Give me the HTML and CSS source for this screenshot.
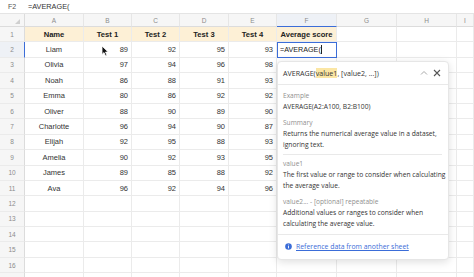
FILE: index.html
```
<!DOCTYPE html>
<html lang="en">
<head>
    <meta charset="UTF-8">
    <title>Sheet</title>
    <link rel="stylesheet" href="styles.css">
</head>
<body>

<div class="formula-bar">
    <span class="cell-ref">F2</span>
    <span class="formula">=AVERAGE(</span>
</div>

<div id="sheet" class="sheet"></div>

<svg class="pointer" width="8" height="12" viewBox="0 0 8 12">
    <path d="M1 1 L1 9.5 L3 7.6 L4.6 11 L6 10.4 L4.5 7.1 L7.2 7 Z" fill="#111" stroke="#fff" stroke-width="0.8"/>
</svg>

<div class="popup">
    <div class="popup-head">
        <span class="signature">AVERAGE(<span class="arg-hl">value1</span>, [value2, ...])</span>
        <span class="head-icons">
            <svg width="8" height="8" viewBox="0 0 8 8"><polyline points="1,5.5 4,2.5 7,5.5" fill="none" stroke="#aaa" stroke-width="1"/></svg>
            <svg width="8" height="8" viewBox="0 0 8 8"><path d="M1 1 L7 7 M7 1 L1 7" stroke="#555" stroke-width="1.1"/></svg>
        </span>
    </div>
    <div class="popup-body">
        <div class="group">
            <div class="label">Example</div>
            <div class="text">AVERAGE(A2:A100, B2:B100)</div>
        </div>
        <div class="group">
            <div class="label">Summary</div>
            <div class="text">Returns the numerical average value in a dataset,<br>ignoring text.</div>
        </div>
        <div class="divider"></div>
        <div class="group">
            <div class="label">value1</div>
            <div class="text">The first value or range to consider when calculating<br>the average value.</div>
        </div>
        <div class="group">
            <div class="label">value2... - [optional] repeatable</div>
            <div class="text">Additional values or ranges to consider when<br>calculating the average value.</div>
        </div>
    </div>
    <div class="popup-foot">
        <svg width="7" height="7" viewBox="0 0 7 7"><circle cx="3.5" cy="3.5" r="3.3" fill="#3b6dd8"/><rect x="3.05" y="3" width="0.9" height="2.4" fill="#fff"/><rect x="3.05" y="1.6" width="0.9" height="0.8" fill="#fff"/></svg>
        <a href="#" class="ref-link">Reference data from another sheet</a>
    </div>
</div>

<script>
    const letters = ['A', 'B', 'C', 'D', 'E', 'F', 'G', 'H', 'I'];
    const heads = ['Name', 'Test 1', 'Test 2', 'Test 3', 'Test 4', 'Average score'];
    const students = [
        ['Liam', 89, 92, 95, 93],
        ['Olivia', 97, 94, 96, 98],
        ['Noah', 86, 88, 91, 93],
        ['Emma', 80, 86, 92, 92],
        ['Oliver', 88, 90, 89, 90],
        ['Charlotte', 96, 94, 90, 87],
        ['Elijah', 92, 95, 88, 93],
        ['Amelia', 90, 92, 93, 95],
        ['James', 89, 85, 88, 92],
        ['Ava', 96, 92, 94, 96]
    ];

    const sheet = document.getElementById('sheet');

    function addCell(cls, text) {
        const div = document.createElement('div');
        div.className = 'cell ' + cls;
        div.innerHTML = text || '';
        sheet.appendChild(div);
        return div;
    }

    addCell('corner', '<span class="corner-mark"></span>');
    letters.forEach(l => addCell('col-head' + (l === 'F' ? ' sel-col' : ''), l));

    // rows 1..16 are numbered, one more blank strip fills the bottom edge
    for (let r = 1; r <= 17; r++) {
        addCell('row-head' + (r === 2 ? ' sel-row' : ''), r <= 16 ? r : '');
        for (let c = 0; c < letters.length; c++) {
            if (r === 1) {
                if (c < heads.length) addCell('title', heads[c]);
                else addCell('');
            } else if (r <= 11) {
                const row = students[r - 2];
                if (c === 0) addCell('name', row[0]);
                else if (c <= 4) addCell('num', row[c]);
                else if (c === 5 && r === 2) addCell('active', '=AVERAGE(<span class="caret"></span>');
                else addCell('');
            } else {
                addCell('');
            }
        }
    }
</script>
</body>
</html>
```
FILE: styles.css
```
body {
    margin: 0;
    width: 474px;
    height: 277px;
    overflow: hidden;
    position: relative;
    background: #fff;
    font-family: "Liberation Sans", Arial, sans-serif;
    color: #222;
}
.formula-bar {
    height: 13px;
    border-bottom: 1px solid #e4e4e4;
    display: flex;
    align-items: center;
    font-size: 7px;
    color: #333;
}
.cell-ref {
    width: 20px;
    padding-left: 8px;
    color: #555;
}
.formula {
    font-size: 7.3px;
}
.sheet {
    display: grid;
    grid-template-columns: 25px 59px 48px 48px 49px 48px 60px 60px 60px 1fr;
    grid-template-rows: 13px;
    grid-auto-rows: 15.4px;
}
.cell {
    box-sizing: border-box;
    border-right: 1px solid #ebebeb;
    border-bottom: 1px solid #ebebeb;
    display: flex;
    align-items: center;
    font-size: 7.5px;
    white-space: nowrap;
    overflow: hidden;
}
.corner {
    background: #f6f6f6;
    border-right: 1px solid #dcdcdc;
    border-bottom: 1px solid #dcdcdc;
    justify-content: flex-end;
    align-items: flex-end;
    padding: 0 4px 2px 0;
}
.corner-mark {
    width: 0;
    height: 0;
    border-left: 5px solid transparent;
    border-bottom: 5px solid #cfcfcf;
}
.col-head {
    background: #f6f6f6;
    border-bottom: 1px solid #dcdcdc;
    border-right: 1px solid #e6e6e6;
    justify-content: center;
    font-size: 6.5px;
    color: #8c8c8c;
}
.col-head.sel-col {
    border-bottom: 1px solid #3b6dd8;
    background: #eef1f6;
}
.row-head {
    background: #f6f6f6;
    border-right: 1px solid #dcdcdc;
    justify-content: center;
    font-size: 6.5px;
    color: #8c8c8c;
}
.row-head.sel-row {
    border-right: 1px solid #3b6dd8;
    background: #eef1f6;
}
.title {
    background: #fdf0d6;
    justify-content: center;
    font-weight: bold;
    font-size: 7.6px;
    color: #222;
}
.name {
    justify-content: center;
    color: #333;
}
.num {
    justify-content: flex-end;
    padding-right: 3px;
    color: #333;
}
.active {
    outline: 1.5px solid #3b6dd8;
    outline-offset: -1px;
    padding-left: 3px;
    font-size: 7.2px;
    color: #222;
    position: relative;
    z-index: 2;
}
.caret {
    display: inline-block;
    width: 0.8px;
    height: 9px;
    margin-left: 0.5px;
    background: #222;
}
.pointer {
    position: absolute;
    left: 101px;
    top: 45px;
}
.popup {
    position: absolute;
    left: 277px;
    top: 61px;
    width: 172px;
    box-sizing: border-box;
    background: #fff;
    border: 1px solid #e6e6e6;
    border-radius: 4px;
    box-shadow: 0 2px 8px rgba(0, 0, 0, 0.13);
    z-index: 5;
    font-family: "Open Sans", "Liberation Sans", sans-serif;
}
.popup-head {
    height: 22px;
    border-bottom: 1px solid #e9e9e9;
    display: flex;
    align-items: center;
    justify-content: space-between;
    padding: 0 7px 0 5px;
}
.signature {
    font-size: 7.1px;
    color: #333;
}
.arg-hl {
    background: #fbe6a4;
}
.head-icons {
    display: flex;
    gap: 5px;
}
.popup-body {
    padding: 5px 5px 0;
}
.group {
    margin-bottom: 5px;
}
.label {
    font-size: 6.6px;
    line-height: 11px;
    color: #8f8f8f;
    white-space: nowrap;
}
.text {
    font-size: 6.7px;
    line-height: 11px;
    color: #333;
    white-space: nowrap;
}
.divider {
    height: 1px;
    background: #e9e9e9;
    margin: -1.5px 1px 3px 0;
}
.popup-foot {
    border-top: 1px solid #e9e9e9;
    height: 24px;
    display: flex;
    align-items: center;
    gap: 4px;
    padding-left: 7px;
}
.ref-link {
    font-size: 6.9px;
    color: #3b6dd8;
    text-decoration: underline;
}
```
